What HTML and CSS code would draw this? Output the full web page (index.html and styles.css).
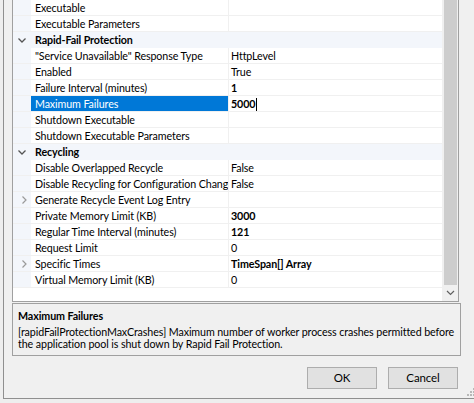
FILE: index.html
```html
<!DOCTYPE html>
<html>
<head>
<meta charset="utf-8">
<link rel="stylesheet" href="styles.css">
</head>
<body>
<div class="dialog">
  <div class="grid">
    <div class="rows">
      <div class="rows-inner">
        <div class="row"><div class="gut"></div><div class="name">Executable</div><div class="val"></div></div>
        <div class="row"><div class="gut"></div><div class="name">Executable Parameters</div><div class="val"></div></div>
        <div class="row cat"><div class="gut"><svg width="10" height="8" viewBox="0 0 10 8"><path d="M1.5 2.5 L5 6 L8.5 2.5" fill="none" stroke="#555" stroke-width="1.3"/></svg></div><div class="cat-name">Rapid-Fail Protection</div></div>
        <div class="row"><div class="gut"></div><div class="name">"Service Unavailable" Response Type</div><div class="val">HttpLevel</div></div>
        <div class="row"><div class="gut"></div><div class="name">Enabled</div><div class="val">True</div></div>
        <div class="row"><div class="gut"></div><div class="name">Failure Interval (minutes)</div><div class="val b">1</div></div>
        <div class="row sel"><div class="gut"></div><div class="name">Maximum Failures</div><div class="val b"><span class="edit">5000</span><span class="caret"></span></div></div>
        <div class="row"><div class="gut"></div><div class="name">Shutdown Executable</div><div class="val"></div></div>
        <div class="row"><div class="gut"></div><div class="name">Shutdown Executable Parameters</div><div class="val"></div></div>
        <div class="row cat"><div class="gut"><svg width="10" height="8" viewBox="0 0 10 8"><path d="M1.5 2.5 L5 6 L8.5 2.5" fill="none" stroke="#555" stroke-width="1.3"/></svg></div><div class="cat-name">Recycling</div></div>
        <div class="row"><div class="gut"></div><div class="name">Disable Overlapped Recycle</div><div class="val">False</div></div>
        <div class="row"><div class="gut"></div><div class="name">Disable Recycling for Configuration Change</div><div class="val">False</div></div>
        <div class="row"><div class="gut"><svg class="exp" width="8" height="10" viewBox="0 0 8 10"><path d="M2.5 1.5 L6 5 L2.5 8.5" fill="none" stroke="#9a9a9a" stroke-width="1.2"/></svg></div><div class="name">Generate Recycle Event Log Entry</div><div class="val"></div></div>
        <div class="row"><div class="gut"></div><div class="name">Private Memory Limit (KB)</div><div class="val b">3000</div></div>
        <div class="row"><div class="gut"></div><div class="name">Regular Time Interval (minutes)</div><div class="val b">121</div></div>
        <div class="row"><div class="gut"></div><div class="name">Request Limit</div><div class="val">0</div></div>
        <div class="row"><div class="gut"><svg class="exp" width="8" height="10" viewBox="0 0 8 10"><path d="M2.5 1.5 L6 5 L2.5 8.5" fill="none" stroke="#9a9a9a" stroke-width="1.2"/></svg></div><div class="name">Specific Times</div><div class="val b">TimeSpan[] Array</div></div>
        <div class="row"><div class="gut"></div><div class="name">Virtual Memory Limit (KB)</div><div class="val">0</div></div>
      </div>
    </div>
    <div class="scrollbar">
      <div class="thumb"></div>
      <div class="arrow"><svg width="9" height="6" viewBox="0 0 9 6"><path d="M1 1 L4.5 4.5 L8 1" fill="none" stroke="#606060" stroke-width="1.2"/></svg></div>
    </div>
  </div>
  <div class="desc">
    <div class="desc-title">Maximum Failures</div>
    <div class="desc-text">[rapidFailProtectionMaxCrashes] Maximum number of worker process crashes permitted before the application pool is shut down by Rapid Fail Protection.</div>
  </div>
  <div class="buttons">
    <div class="btn">OK</div>
    <div class="btn">Cancel</div>
  </div>
  <svg class="grip" width="10" height="10" viewBox="0 0 10 10">
    <rect x="7" y="1" width="2" height="2" fill="#b8b8b8"/>
    <rect x="4" y="4" width="2" height="2" fill="#b8b8b8"/>
    <rect x="7" y="4" width="2" height="2" fill="#b8b8b8"/>
    <rect x="1" y="7" width="2" height="2" fill="#b8b8b8"/>
    <rect x="4" y="7" width="2" height="2" fill="#b8b8b8"/>
    <rect x="7" y="7" width="2" height="2" fill="#b8b8b8"/>
  </svg>
</div>
</body>
</html>
```
FILE: styles.css
```css
html, body {
  margin: 0;
  padding: 0;
}
body {
  background: #eeeeee;
  width: 474px;
  height: 403px;
  overflow: hidden;
  font-family: "Lato", "Liberation Sans", sans-serif;
  font-size: 10.7px;
  letter-spacing: -0.1px;
  color: #000;
}
.dialog {
  position: relative;
  margin-left: 3px;
  width: 465px;
  height: 398px;
  background: #f0f0f0;
  border-left: 1px solid #8f8f8f;
  border-right: 1px solid #8f8f8f;
  border-bottom: 1px solid #8f8f8f;
  padding-left: 8px;
  box-sizing: content-box;
}
.grid {
  display: flex;
  width: 445px;
  height: 301px;
  background: #fff;
  border-left: 1px solid #a0a0a0;
  border-right: 1px solid #a0a0a0;
  border-bottom: 1px solid #a0a0a0;
}
.rows {
  width: 429px;
  height: 301px;
  overflow: hidden;
}
.row {
  display: flex;
  height: 15px;
  border-bottom: 1px solid #f0f0f0;
  line-height: 15px;
  white-space: nowrap;
}
.gut {
  width: 18px;
  flex: none;
  background: #f3f6fb;
  display: flex;
  align-items: center;
  justify-content: center;
}
.gut .exp {
  margin-left: 4px;
}
.name {
  width: 193px;
  flex: none;
  padding-left: 4px;
  overflow: hidden;
  border-right: 1px solid #f0f0f0;
}
.val {
  flex: 1;
  padding-left: 2px;
  overflow: hidden;
}
.b {
  font-weight: bold;
}
.cat {
  background: #f3f6fb;
  border-bottom-color: #f3f6fb;
}
.cat-name {
  padding-left: 4px;
  font-weight: bold;
}
.sel .name {
  background: #0078d7;
  color: #fff;
}
.caret {
  display: inline-block;
  width: 1px;
  height: 13px;
  background: #000;
  vertical-align: -3px;
  margin-left: 1px;
}
.scrollbar {
  width: 16px;
  background: #f0f0f0;
  display: flex;
  flex-direction: column;
}
.thumb {
  margin: 0 1px 0 2px;
  height: 285px;
  background: #cdcdcd;
}
.arrow {
  flex: 1;
  display: flex;
  align-items: center;
  justify-content: center;
}
.desc {
  margin-top: 1px;
  width: 439px;
  height: 45px;
  border: 1px solid #a0a0a0;
  padding: 4px 3px 2px 5px;
  line-height: 12px;
}
.desc-title {
  font-weight: bold;
  margin-top: 2px;
  margin-bottom: 4px;
}
.buttons {
  display: flex;
  justify-content: flex-end;
  gap: 11px;
  width: 446px;
  margin-top: 11px;
}
.btn {
  width: 68px;
  height: 20px;
  border: 1px solid #adadad;
  background: #e1e1e1;
  text-align: center;
  line-height: 20px;
  font-size: 11.5px;
}
.grip {
  position: absolute;
  right: 1px;
  bottom: 1px;
}
```
